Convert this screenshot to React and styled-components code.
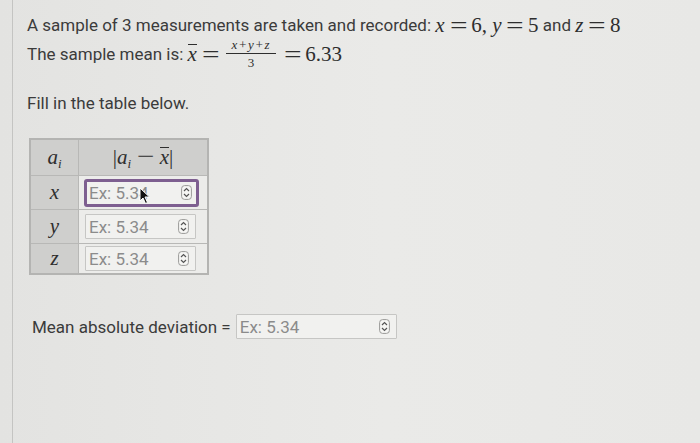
import React from "react";
import styled, { createGlobalStyle } from "styled-components";

const GlobalStyle = createGlobalStyle`
  html, body {
    margin: 0;
    padding: 0;
    background: #e7e7e5;
  }
  body {
    font-family: Roboto, "Noto Sans", sans-serif;
    color: #3b3b3b;
  }
`;

const Page = styled.div`
  width: 700px;
  height: 443px;
  box-sizing: border-box;
  background: linear-gradient(90deg, #e3e3e1 0%, #eaeae8 55%, #e8e8e6 100%);
  padding-left: 12px;
  overflow: hidden;
`;

const Panel = styled.div`
  height: 100%;
  border-left: 1px solid #c4c4c2;
  padding: 14px 0 0 14px;
  box-sizing: border-box;
`;

const Line = styled.div`
  font-size: 17px;
  height: ${(p) => p.$h || 22}px;
  display: flex;
  align-items: center;
  white-space: pre;
  margin-top: ${(p) => p.$top || 0}px;
`;

const M = styled.span`
  font-family: "Liberation Serif", "DejaVu Serif", serif;
  font-style: ${(p) => (p.$up ? "normal" : "italic")};
  font-size: 21px;
  color: #2e2e2e;
`;

const Sub = styled.span`
  font-size: 13px;
  position: relative;
  top: 4px;
`;

const Op = styled.span`
  font-family: "Liberation Serif", serif;
  font-size: 24px;
  line-height: 20px;
  margin: 0 ${(p) => p.$m || 6}px 0 ${(p) => (p.$m || 6) + 1}px;
  color: #2e2e2e;
  display: inline-block;
  transform: scaleX(1.3);
`;

const Bar = styled.span`
  border-top: 1px solid #2e2e2e;
  line-height: 18px;
  display: inline-block;
`;

const Frac = styled.span`
  display: inline-flex;
  flex-direction: column;
  align-items: center;
  margin: 0 3px;
  font-family: "Liberation Serif", serif;
  font-size: 13px;
  line-height: 14px;
  color: #2e2e2e;
`;

const Num = styled.span`
  font-style: italic;
  padding: 0 5px 1px;
  border-bottom: 1px solid #2e2e2e;
  letter-spacing: 1px;
`;

const Den = styled.span`
  padding-top: 2px;
`;

const Table = styled.table`
  margin-top: 24px;
  margin-left: 2px;
  border-collapse: collapse;
  border: 2px solid #b4b4b2;
`;

const Th = styled.th`
  background: #cfcfcd;
  border: 1px solid #b8b8b6;
  height: 35px;
  width: ${(p) => p.$w}px;
  font-weight: normal;
  padding: 0;
`;

const Td = styled.td`
  background: ${(p) => (p.$label ? "#cfcfcd" : "#ececea")};
  border: 1px solid #b8b8b6;
  height: ${(p) => p.$h || 33}px;
  text-align: center;
  padding: 0 ${(p) => (p.$label ? 0 : 7)}px 0 ${(p) => (p.$label ? 0 : 5)}px;
`;

const InputBox = styled.div`
  position: relative;
  display: flex;
  align-items: center;
  justify-content: space-between;
  box-sizing: border-box;
  width: ${(p) => p.$w}px;
  height: ${(p) => (p.$active ? 28 : 25)}px;
  border: ${(p) => (p.$active ? "3px solid #7e5f90" : "1px solid #c6c6c4")};
  border-radius: ${(p) => (p.$active ? 3 : 1)}px;
  background: #f1f1ef;
  padding: 0 ${(p) => (p.$active ? 4 : 6)}px 0 ${(p) => (p.$active ? 2 : 3)}px;
  font-size: 17px;
  color: #8b8b8b;
  margin-left: ${(p) => (p.$active ? 0 : 1)}px;
`;

const Cursor = styled.svg`
  position: absolute;
  left: 52px;
  top: 5px;
`;

const Footer = styled.div`
  margin-top: 39px;
  margin-left: 5px;
  display: flex;
  align-items: center;
  font-size: 17px;
  gap: 4px;
`;

const Spinner = () => (
  <svg width="11" height="15" viewBox="0 0 11 15">
    <rect x="0.6" y="0.6" width="9.8" height="13.8" rx="3" fill="#f6f6f4" stroke="#9a9a98" strokeWidth="1" />
    <path d="M3 6 L5.5 3.6 L8 6" fill="none" stroke="#555" strokeWidth="1.2" />
    <path d="M3 9 L5.5 11.4 L8 9" fill="none" stroke="#555" strokeWidth="1.2" />
  </svg>
);

const Field = ({ width, active }) => (
  <InputBox $w={width} $active={active}>
    <span>Ex: 5.34</span>
    <Spinner />
    {active && (
      <Cursor width="12" height="18" viewBox="0 0 12 18">
        <path d="M1 1 L1 14 L4 11 L6.5 16.5 L8.5 15.5 L6 10 L10.5 10 Z" fill="#111" stroke="#fff" strokeWidth="1" />
      </Cursor>
    )}
  </InputBox>
);

const Overline = ({ children }) => <Bar>{children}</Bar>;

export default function App() {
  return (
    <>
      <GlobalStyle />
      <Page>
        <Panel>
          <Line>
            A sample of 3 measurements are taken and recorded: <M>x</M>
            <Op>=</Op>
            <M $up>6</M>
            <M $up>, </M>
            <M>y</M>
            <Op>=</Op>
            <M $up>5</M> and <M>z</M>
            <Op>=</Op>
            <M $up>8</M>
          </Line>
          <Line $top={2} $h={32}>
            The sample mean is: <M><Overline>x</Overline></M>
            <Op>=</Op>
            <Frac>
              <Num>x+y+z</Num>
              <Den>3</Den>
            </Frac>
            <Op>=</Op>
            <M $up>6.33</M>
          </Line>
          <Line $top={22}>Fill in the table below.</Line>
          <Table>
            <thead>
              <tr>
                <Th $w={47}>
                  <M>
                    a<Sub>i</Sub>
                  </M>
                </Th>
                <Th $w={128}>
                  <M $up>|</M>
                  <M>
                    a<Sub>i</Sub>
                  </M>
                  <Op $m={7}>−</Op>
                  <M>
                    <Overline>x</Overline>
                  </M>
                  <M $up>|</M>
                </Th>
              </tr>
            </thead>
            <tbody>
              <tr>
                <Td $label $h={33}>
                  <M>x</M>
                </Td>
                <Td $h={33}>
                  <Field width={115} active />
                </Td>
              </tr>
              <tr>
                <Td $label $h={33}>
                  <M>y</M>
                </Td>
                <Td $h={33}>
                  <Field width={111} />
                </Td>
              </tr>
              <tr>
                <Td $label $h={29}>
                  <M>z</M>
                </Td>
                <Td $h={29}>
                  <Field width={111} />
                </Td>
              </tr>
            </tbody>
          </Table>
          <Footer>
            Mean absolute deviation =
            <Field width={161} />
          </Footer>
        </Panel>
      </Page>
    </>
  );
}
